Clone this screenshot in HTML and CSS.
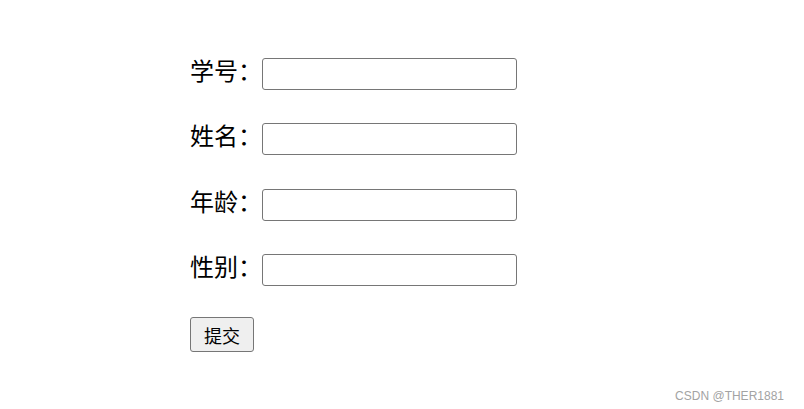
FILE: index.html
```html
<!DOCTYPE html>
<html lang="zh">
<head>
<meta charset="utf-8">
<link rel="stylesheet" href="styles.css">
</head>
<body>
<form class="form">
  <div class="row"><label class="label">学号：</label><input class="field" type="text"></div>
  <div class="row"><label class="label">姓名：</label><input class="field" type="text"></div>
  <div class="row"><label class="label">年龄：</label><input class="field" type="text"></div>
  <div class="row"><label class="label">性别：</label><input class="field" type="text"></div>
  <div class="actions"><button class="submit" type="button">提交</button></div>
</form>
<div class="watermark">CSDN @THER1881</div>
</body>
</html>
```
FILE: styles.css
```css
html, body {
  margin: 0;
  padding: 0;
  background: #fff;
}
body {
  width: 804px;
  height: 409px;
  position: relative;
  font-family: "Noto Sans CJK SC", "Microsoft YaHei", sans-serif;
  color: #000;
}
.form {
  display: flex;
  flex-direction: column;
  padding: 58px 0 0 190px;
  gap: 33.3px;
}
.row {
  display: flex;
  align-items: flex-start;
  height: 32px;
}
.label {
  font-size: 24px;
  line-height: 24px;
  width: 72px;
  white-space: nowrap;
}
.field {
  box-sizing: border-box;
  width: 255px;
  height: 32px;
  margin: 0;
  border: 1px solid #767676;
  border-radius: 3px;
  background: #fff;
  font-size: 16px;
}
.actions {
  margin-top: -2px;
}
.submit {
  box-sizing: border-box;
  width: 64px;
  height: 35px;
  margin: 0;
  padding: 0;
  border: 1px solid #767676;
  border-radius: 3px;
  background: #efefef;
  font-family: "Noto Sans CJK SC", sans-serif;
  font-size: 18px;
  color: #000;
}
.watermark {
  position: absolute;
  right: 20px;
  bottom: 6px;
  font-family: "Liberation Sans", Arial, sans-serif;
  font-size: 12px;
  color: #a3a3a3;
}
```
